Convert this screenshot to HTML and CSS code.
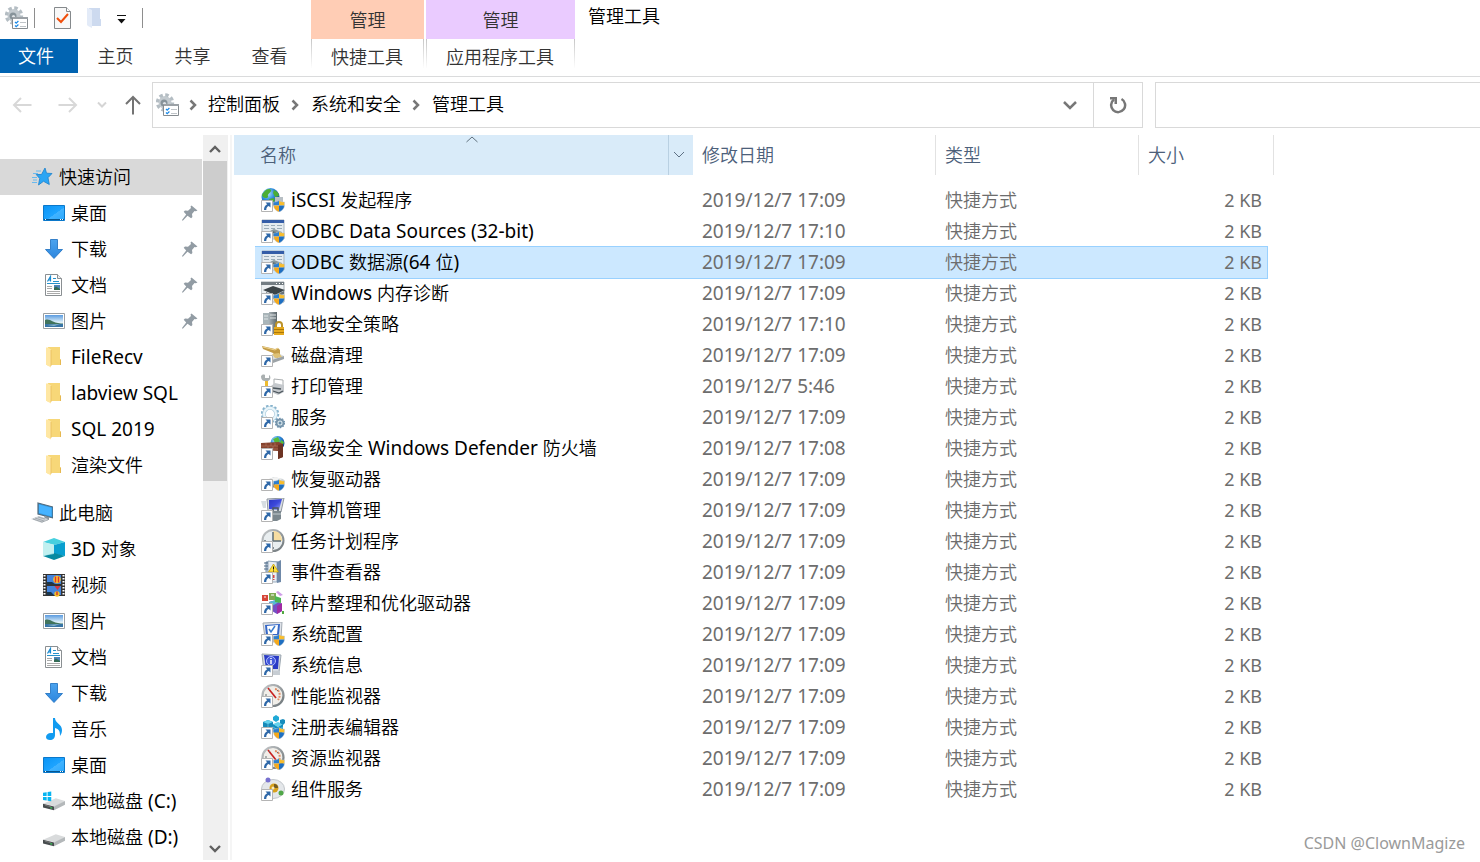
FILE: index.html
```html
<!DOCTYPE html>
<html lang="zh-CN">
<head>
<meta charset="utf-8">
<title>管理工具</title>
<link rel="stylesheet" href="styles.css">
</head>
<body>
<svg class="defs" aria-hidden="true">
  <defs>
    <linearGradient id="g-blue" x1="0" y1="0" x2="1" y2="1"><stop offset="0" stop-color="#0a94f5"/><stop offset=".55" stop-color="#1ea4ff"/><stop offset=".56" stop-color="#41b3ff"/><stop offset="1" stop-color="#2ba9ff"/></linearGradient>
    <linearGradient id="g-sky" x1="0" y1="0" x2="0" y2="1"><stop offset="0" stop-color="#5a9be0"/><stop offset=".6" stop-color="#dff0f8"/></linearGradient>
    <linearGradient id="g-down" x1="0" y1="0" x2="0" y2="1"><stop offset="0" stop-color="#4ba3ee"/><stop offset="1" stop-color="#2d86de"/></linearGradient>
    <linearGradient id="g-screen" x1="0" y1="0" x2="1" y2="1"><stop offset="0" stop-color="#2a35c4"/><stop offset=".5" stop-color="#3c49dc"/><stop offset="1" stop-color="#9fb0f5"/></linearGradient>
    <radialGradient id="g-globe" cx=".35" cy=".3" r=".8"><stop offset="0" stop-color="#b8e6ff"/><stop offset=".45" stop-color="#2f8fdc"/><stop offset="1" stop-color="#0c2f80"/></radialGradient>
    <linearGradient id="g-steel" x1="0" y1="0" x2="1" y2="0"><stop offset="0" stop-color="#a9b2b6"/><stop offset="1" stop-color="#5b666c"/></linearGradient>
    <linearGradient id="g-rim" x1="0" y1="0" x2="1" y2="1"><stop offset="0" stop-color="#c5c8ca"/><stop offset="1" stop-color="#6c7478"/></linearGradient>
  </defs>

  <symbol id="cut" viewBox="0 0 24 24"><path d="M.5 12.5h11v11H.5z" fill="#fff" stroke="#b4b4b4"/><path d="M4.500 14.500h5v5l-1.700-1.500c-1.800.7-2.500 1.800-2.500 4H3c0-3 1-4.700 3.200-5.800z" fill="#2f68a8"/></symbol>
  <symbol id="shield" viewBox="0 0 24 24"><path d="M18 12.500c-1.700 1.200-3.500 1.500-5.500 1.500v3.500H18z" fill="#2c7fd0"/><path d="M18 12.500c1.700 1.200 3.500 1.500 5.500 1.500v3.500H18z" fill="#f9bd2c"/><path d="M12.500 17.500H18V24c-3.200-1.300-5.200-3.200-5.500-6.500z" fill="#f5a91c"/><path d="M23.500 17.500H18V24c3.200-1.300 5.200-3.200 5.500-6.500z" fill="#1e6fc2"/><path d="M18 12.500c1.700 1.200 3.500 1.500 5.500 1.500v3.500c-.3 3.300-2.300 5.200-5.500 6.500-3.200-1.300-5.200-3.200-5.500-6.500V14c2 0 3.800-.3 5.500-1.500z" fill="none" stroke="#bcc8d2" stroke-width=".5"/></symbol>

  <symbol id="tools" viewBox="0 0 24 24"><circle cx="9" cy="9.500" r="6.500" fill="#c3cacf"/><circle cx="9" cy="9.500" r="7.600" fill="none" stroke="#b4bdc3" stroke-width="3.200" stroke-dasharray="3.500 2.470"/><circle cx="8" cy="10" r="3.500" fill="#87939a"/><circle cx="8.500" cy="10.500" r="1.600" fill="#dfe3e6"/><path d="M7.500 11.500h15v11h-15z" fill="#fff" stroke="#858b90"/><path d="M8 11h15v2H8z" fill="#9ba1a6"/><path d="m10 16 1.200 1.200 2.200-2.200M10 19.500l1.200 1.200 2.200-2.200" fill="none" stroke="#1989e8" stroke-width="1.200"/><path d="M15 16.500h6M15 20.500h6" stroke="#bfc4c8"/></symbol>

  <symbol id="star" viewBox="0 0 22 22"><path d="m14 2 1.500 5.200L21 7.500l-4 4.200 1.300 6.800-5.800-3.200-5 3.700 1.200-6.500-3.500-4h5.300z" fill="#2ba5f4" stroke="#1a80cc" stroke-width=".8"/><path d="M5 5h5M2 7.500h5M1 11.500h5M2 14h4M1 16.500h5" stroke="#5cb7f2" stroke-width=".9"/></symbol>
  <symbol id="desktop" viewBox="0 0 22 22"><path d="M.5 3.500h21v15H.5z" fill="url(#g-blue)" stroke="#0b78ca"/><path d="M1 17h20v1H1z" fill="#07568f"/><path d="M2 17.500h1m14 0h1m1 0h1" stroke="#fff"/></symbol>
  <symbol id="download" viewBox="0 0 22 22"><path d="M7.500 1.500h7v10h5L11 20.500l-8.500-9h5z" fill="url(#g-down)" stroke="#2877c4" stroke-width=".9"/></symbol>
  <symbol id="document" viewBox="0 0 22 22"><path d="M2.500.5h12l4 4v17h-16z" fill="#fff" stroke="#8a8f92"/><path d="M14.500.5v4h4" fill="#eee" stroke="#8a8f92"/><path d="m4.500 7.500 3-5v5M5 6h3" fill="none" stroke="#1689d0" stroke-width="1.200"/><path d="M10 4.500h3M10 7.500h6M4 9.500h13" stroke="#2792cc"/><path d="M4 12.500h5M4 14.500h5M4 17.500h13M4 19.500h13" stroke="#aaa"/><path d="M11 11h6v5h-6z" fill="#4c83b5"/><path d="m11 14 2-1.500 4 2.500v1h-6z" fill="#346b55"/></symbol>
  <symbol id="picture" viewBox="0 0 22 22"><path d="M.5 3.500h21v15H.5z" fill="#fff" stroke="#9a9fa3"/><path d="M2 5h18v12H2z" fill="url(#g-sky)"/><path d="M2 10c3-1 5 0 8 1.500s7 2 10 2v1H2z" fill="#40735c"/><path d="M2 14h18v3H2z" fill="#3774a5"/><path d="m4 15 13-1-6 2z" fill="#8bb7c8"/></symbol>
  <symbol id="folder" viewBox="0 0 22 22"><path d="M5 1h12v12l1 1v5H5z" fill="#f7d778"/><path d="M17 13v6h1v-5z" fill="#e6b850"/><path d="M3 1.500h2l3 2V21.500l-4-2.200-1-1z" fill="#ffe7a3"/><path d="M8 4v16" stroke="#e9bd5b" stroke-width=".8"/></symbol>
  <symbol id="computer" viewBox="0 0 22 22"><path d="m7 1 15 4v11L7 12z" fill="#3196dc" stroke="#52697b" stroke-width="1.200"/><path d="m8 2.500 12.500 3.300v8.500L8 11z" fill="#46b3ff"/><path d="m13 14 5 1v3l-4-1z" fill="#89949b"/><path d="m0 17 8-3 9 3-6 4z" fill="#ccd1d5"/><path d="m2 17 9 3m-7-4 9 3m-6-4 7 2M11 20l6-2" stroke="#929a9f" stroke-width=".7"/></symbol>
  <symbol id="cube" viewBox="0 0 22 22"><path d="m11 0 11 4-11 3L0 4z" fill="#46d0df"/><path d="m0 4 11 3v9L0 18z" fill="#b9edef"/><path d="m22 4-11 3v9l11 2z" fill="#099fcf"/><path d="m0 18 11-3 11 3-11 4z" fill="#078aa0"/><path d="M11 6.500V16L0 18V4z" fill="#c5f1f1" opacity=".7"/></symbol>
  <symbol id="video" viewBox="0 0 22 24"><path d="M0 1h22v22H0z" fill="#333"/><path d="M1.500 2v20M20.500 2v20" stroke="#fff" stroke-width="2" stroke-dasharray="1.600 1.400"/><path d="M4 2h14v9H4zM4 13h14v9H4z" fill="#4384dc"/><path d="M4 9h5l3 2H4zM4 19h4l3 3H4z" fill="#173750"/><circle cx="14" cy="6.500" r="3.700" fill="#ffd02c"/><path d="M12.500 3.500v6M15.500 3.500v6" stroke="#dc3333" stroke-width="1.600"/><path d="m11.500 13 3 4 3-4z" fill="#d53842"/><circle cx="14" cy="21" r="2.700" fill="#f3bd26"/><path d="M14 18.500V22" stroke="#d43a33" stroke-width="1.500"/></symbol>
  <symbol id="music" viewBox="0 0 22 22"><path d="M10 0h2c0 5 7 6 7 12 0 3-1 4-2 6 0-5-1-7-5-8v7c0 3-2 5-5 5-2.500 0-4-1-4-3s2-4 5-4h2z" fill="#129bf0"/></symbol>
  <symbol id="disk" viewBox="0 0 24 22"><path d="m0 14 14-6 10 3-10 6z" fill="#d9dbdc"/><path d="m0 14 12 3v4L0 18z" fill="#474c4e"/><path d="m12 17 12-6v4L12 21z" fill="#b4b8ba"/><path d="m2 15.500 7 2" stroke="#777"/><path d="M8 18.500h2" stroke="#32d354" stroke-width="1.300"/></symbol>
  <symbol id="windisk" viewBox="0 0 24 22"><use href="#disk"/><path d="m0 2 4-.5v4H0zm5-.7 4-.6v4.800H5zM0 6.500h4v4L0 10zm5 0h4v4.800l-4-.7z" fill="#07b5f1"/></symbol>
  <symbol id="pin" viewBox="0 0 16 16"><path d="m9.500.5 6 5-1.700.7-1.300-.3-2.500 3 .4 3.100-1.300 1.300L5.500 10.700 1 15.500H0V15l4.200-5.600L1.700 6.800 3 5.500l3 .2L9 3 8.500 1.500z" fill="#929ca4"/></symbol>

  <symbol id="globe" viewBox="0 0 24 24"><circle cx="9.500" cy="9" r="9" fill="url(#g-globe)"/><path d="M3 4c2-3 6-4 7-2S6 6 7 8s-3 3-5 1 0-4 1-5zM13 2c3 1 5 3 5 6l-4 1-2-4zM8 11l5-1 1 3-5 3z" fill="#4cae35"/><path d="M14 9h8v5h-8z" fill="#b8bfc4"/></symbol>
  <symbol id="odbc" viewBox="0 0 24 24"><path d="M1 1h22v19H1z" fill="#e4ebf0" stroke="#aab5bf"/><path d="M1 1h22v3H1z" fill="#345da8"/><path d="M3 6.500h5m2 0h4m2 0h5M3 9.500h5m2 0h4m2 0h5" stroke="#9aacb8"/><path d="m7 13 6-3 8 3v4H7z" fill="#8a999d"/><path d="m10 12 5 1v4h-5z" fill="#4b6065"/></symbol>
  <symbol id="memory" viewBox="0 0 24 24"><path d="M0 1h23v20H0z" fill="#edf0f2" stroke="#a5adb2"/><path d="M0 1h23v3H0z" fill="#747d83"/><path d="M15 2.500h1m2 0h1m2 0h1" stroke="#fff"/><path d="m2 9 10-4 12 4-10 5z" fill="#3c4448"/><path d="m5 11 8 4v3l-8-4zM14 14l9-4v3l-9 4z" fill="#67737a"/></symbol>
  <symbol id="policy" viewBox="0 0 24 24"><path d="M2 1h6v21H2z" fill="#a9b5b9"/><path d="M8 0h8v22H8z" fill="url(#g-steel)"/><path d="M3 4h4M3 7h4m2-4h6M9 6h6" stroke="#e0e5e6"/><path d="M15 15v-2c0-4 6-4 6 0v2" fill="none" stroke="#bb9229" stroke-width="2"/><path d="M13 15h10v8H13z" fill="#e6a91d"/><path d="M13 17.500h10m-10 3h10" stroke="#9d6c00" stroke-width=".8"/></symbol>
  <symbol id="cleanup" viewBox="0 0 24 24"><path d="m3 14 14-4 6 3-9 5-11-1z" fill="#d9dddf"/><path d="m11 17 12-4v3l-11 4z" fill="#9ca3a7"/><path d="m1 3 13 3 3-1 2 2v6l-3 2-4-5L2 6z" fill="#c39c48"/><path d="m2 4 12 3 3-2" stroke="#f0d58e" fill="none"/><path d="m11 11 7-1 3 4-7 1z" fill="#dfc276"/></symbol>
  <symbol id="printer" viewBox="0 0 24 24"><path d="M0 2c0 4 2 5 4 5v7h3V7c3-1 3-5 1-6v3H4V1C2 0 1 1 0 2z" fill="#aab0b1"/><path d="M4 7h3v5H4z" fill="#edbb2e"/><path d="m13 5 9 1v6h-9z" fill="#fff" stroke="#a8acae"/><path d="m10 12 4-3 9 2v7l-6 3-7-3z" fill="#c4c8cc"/><path d="m12 14 8 1m-8 2 6 2 4-2" fill="none" stroke="#4b555c" stroke-width="1.300"/></symbol>
  <symbol id="services" viewBox="0 0 24 24"><circle cx="9" cy="9" r="8" fill="none" stroke="#86b2cc" stroke-width="2.500" stroke-dasharray="2.400 1.790"/><circle cx="9" cy="9" r="6" fill="none" stroke="#a8c9dc" stroke-width="3.500"/><circle cx="9" cy="9" r="6" fill="none" stroke="#e9f5fa" stroke-width="2.300"/><circle cx="19" cy="18" r="3.500" fill="#deebf0" stroke="#7794aa" stroke-width="2"/><circle cx="19" cy="18" r="4.600" fill="none" stroke="#6c90ab" stroke-width="1.200" stroke-dasharray="1.500 1.390"/><circle cx="19" cy="18" r="1.500" fill="#6c90ab"/></symbol>
  <symbol id="firewall" viewBox="0 0 24 24"><circle cx="16.500" cy="7" r="7" fill="url(#g-globe)"/><path d="m12 3 5-2 2 4-4 4zM20 4l3 2-2 5-3-1z" fill="#55bb3b"/><path d="m0 7 18-1 4 2v13l-5 2v-8L0 14z" fill="#87442f"/><path d="m17 9 5-1v13l-5 2z" fill="#6d3323"/><path d="M0 10h17M0 13h17M5 7v3m5-3v3m4-3v3M7 10v3m5-3v3" stroke="#b0745c" stroke-width=".7"/></symbol>
  <symbol id="recovery" viewBox="0 0 24 24"><path d="m3 14 10-4 9 2 2 2-10 5-11-2z" fill="#cfd3d5"/><path d="m3 14 11 3v4L3 17z" fill="#6f7679"/><path d="m6 13 8-3 7 2-8 4z" fill="#f2f3f3"/></symbol>
  <symbol id="manage" viewBox="0 0 24 24"><path d="m6 1 17-1-3 14-13-1z" fill="#d9dde1" stroke="#8f97a0"/><path d="m8 2 13-1-3 11-10-1z" fill="url(#g-screen)"/><path d="M0 3h5v7H2z" fill="#d7dde2"/><path d="M9 13h11v8l-4 2H9z" fill="#7b878e"/><path d="M12 13v-3h5v3" fill="none" stroke="#4c5860" stroke-width="1.500"/><path d="M9 16h11" stroke="#c4cbce"/></symbol>
  <symbol id="clock" viewBox="0 0 24 24"><circle cx="12" cy="11.500" r="10.500" fill="#e9eef0" stroke="url(#g-rim)" stroke-width="2"/><path d="M12 2v10h9C21 6 18 2 12 2z" fill="#f7dda1"/><path d="M12 3v9h8M12 18v2M3 12h2" fill="none" stroke="#5e6d77" stroke-width="1.500"/></symbol>
  <symbol id="event" viewBox="0 0 24 24"><path d="M5 2h12v19H5z" fill="#bccada" stroke="#718ba4"/><path d="m7 1 9 1v20H7z" fill="#e8edf3" stroke="#718ba4" stroke-width=".7"/><path d="m16 2 4-2v22l-4 1z" fill="#6f89a8"/><path d="M3 3h4M3 6h4M3 9h4" stroke="#526d87"/><path d="m12.500 4 5 8h-10z" fill="#ffe13d" stroke="#bc9700" stroke-width=".7"/><path d="M12.500 6.500v3m0 1v1" stroke="#111"/><path d="M12.500 15v3m0 1v1" stroke="#d84343" stroke-width="2"/></symbol>
  <symbol id="defrag" viewBox="0 0 24 24"><path d="M1 4h6v6H1z" fill="#d64638"/><path d="M8 2h7v7H8z" fill="#80aa56"/><path d="m17 0 5 4-3 1-4-4z" fill="#cf9ee8"/><path d="m8 11 7-2 6 4v7l-5 3-5-3z" fill="#7450c3"/><path d="m8 11 7-2 3 2-7 4z" fill="#58bbd4"/><path d="m14 5 6 2v5l-6-1z" fill="#4cb655"/><path d="m16 15 5-3v8l-5 3z" fill="#a02ba3"/><path d="M21 20h2v3h-2z" fill="#52aa42"/><path d="M3 6h2m5-2h3" stroke="#fff"/></symbol>
  <symbol id="config" viewBox="0 0 24 24"><path d="m2 1 19-1-1 16H4z" fill="#dfe3e9" stroke="#a2aab3"/><path d="m4 3 15-1-1 11H5z" fill="#3567c7"/><path d="m6 4 11-1-1 9H7z" fill="#fff"/><path d="m8 7 2 3 4-6" fill="none" stroke="#387bcc" stroke-width="1.500"/><path d="m7 16 8-1 4 4-9 2z" fill="#adb9c3"/></symbol>
  <symbol id="info" viewBox="0 0 24 24"><path d="m1 1 19 1-2 17H3z" fill="#d6dbe2" stroke="#9ba6b0"/><path d="m3 2 15 1-1 13H5z" fill="#293bc5"/><circle cx="10" cy="8" r="4.500" fill="#4459da" stroke="#aebcff"/><path d="M10 7v4m0-6v1" stroke="#fff" stroke-width="1.500"/><path d="M11 18h8v4h-8z" fill="#c7cdd3"/></symbol>
  <symbol id="gauge" viewBox="0 0 24 24"><circle cx="12" cy="11.500" r="10.500" fill="#f0eee9" stroke="url(#g-rim)" stroke-width="2.200"/><path d="M14 5c5 1 6 7 3 11" fill="none" stroke="#e28d66" stroke-width="2" stroke-dasharray="2 1"/><path d="m7 4 8 10" stroke="#c82120" stroke-width="1.700"/><path d="M4 11h2m2-6 1 1m8 0-1 1" stroke="#656e72"/></symbol>
  <symbol id="registry" viewBox="0 0 24 24"><path d="m2 7 5-2 5 2v11l-5 3-5-3z" fill="#1689b8"/><path d="m2 7 5-2 5 2-5 2zM12 9l5-2 5 2-5 3z" fill="#65d2ed"/><path d="m12 9 5 3 5-3v8l-5 3-5-3z" fill="#118fc1"/><path d="M7 9v11M2 12l5 3 5-3 5 3 5-3" stroke="#7fd4e9" stroke-width=".6" fill="none"/><path d="m12 2 3-2 3 2v3l-3 2-3-2z" fill="#20a9d6"/><path d="m19 5 3-1 2 1v3l-2 2-3-2z" fill="#178dbd"/></symbol>
  <symbol id="component" viewBox="0 0 24 24"><ellipse cx="12" cy="12" rx="11.500" ry="9.500" fill="#e4e7ea" stroke="#c1c6ca"/><circle cx="7" cy="3" r="2.500" fill="#7770cf"/><circle cx="13" cy="11" r="4.500" fill="#d8a11b"/><path d="M13 7v4h4a4 4 0 0 0-4-4z" fill="#735a20"/><circle cx="12" cy="11" r="1.500" fill="#f7eabc"/><circle cx="20" cy="16" r="2.500" fill="#50a747"/></symbol>
</svg>

<header class="ribbon">
  <div class="ribbon-main">
    <div class="quick-bar">
      <svg class="icon"><use href="#tools"/></svg>
      <span class="divider"></span>
      <button class="quick-check" aria-label="属性"><svg width="18" height="22" viewBox="0 0 18 22"><path d="M.5.500h12l4 4v17H.5z" fill="#f8f8f8" stroke="#85898c"/><path d="M12.500.500v4h4" fill="#fff" stroke="#85898c"/><path d="m3 11 4 4 7-8" fill="none" stroke="#f04e0b" stroke-width="2"/></svg></button>
      <button class="quick-folder" aria-label="新建文件夹"><svg width="15" height="22" viewBox="0 0 15 22"><path d="M2 1h11v11h1v7H2z" fill="#cddaef"/><path d="M0 1h1l4 2v18l-4-2-1-1z" fill="#e3ebf8"/></svg></button>
      <button class="quick-more" aria-label="自定义快速访问工具栏"><svg width="10" height="9" viewBox="0 0 10 9"><path d="M1 0h9v1H1zM1.500 4h8l-4 4.500z" fill="#111"/></svg></button>
      <span class="divider"></span>
    </div>
    <nav class="tabs">
      <button class="tab file">文件</button>
      <button class="tab">主页</button>
      <button class="tab">共享</button>
      <button class="tab">查看</button>
    </nav>
  </div>
  <div class="context shortcut"><span class="context-title">管理</span><button class="context-tab">快捷工具</button></div>
  <div class="context app"><span class="context-title">管理</span><button class="context-tab">应用程序工具</button></div>
  <h1 class="window-title">管理工具</h1>
</header>

<div class="navigation">
  <div class="nav-buttons">
    <button class="back" aria-label="后退"><svg width="20" height="16" viewBox="0 0 20 16"><path d="M19.500 8H2m7-7L2 8l7 7" fill="none" stroke="#d8d8d8" stroke-width="2"/></svg></button>
    <button class="forward" aria-label="前进"><svg width="20" height="16" viewBox="0 0 20 16"><path d="M.5 8H18m-7-7 7 7-7 7" fill="none" stroke="#d8d8d8" stroke-width="2"/></svg></button>
    <button class="recent" aria-label="最近浏览的位置"><svg width="10" height="8" viewBox="0 0 10 8"><path d="m1 1.500 4 4 4-4" fill="none" stroke="#d5d5d5" stroke-width="2"/></svg></button>
    <button class="up" aria-label="上移"><svg width="16" height="20" viewBox="0 0 16 20"><path d="M8 19.500V2M1 9l7-7 7 7" fill="none" stroke="#737373" stroke-width="2"/></svg></button>
  </div>
  <div class="address">
    <div class="crumbs">
      <svg class="icon"><use href="#tools"/></svg>
      <svg class="crumb-arrow" viewBox="0 0 8 12"><path d="m1.500 1.500 4.500 4.500-4.500 4.500"/></svg><a href="#">控制面板</a>
      <svg class="crumb-arrow" viewBox="0 0 8 12"><path d="m1.500 1.500 4.500 4.500-4.500 4.500"/></svg><a href="#">系统和安全</a>
      <svg class="crumb-arrow" viewBox="0 0 8 12"><path d="m1.500 1.500 4.500 4.500-4.500 4.500"/></svg><a href="#">管理工具</a>
    </div>
    <button class="history" aria-label="以前的位置"><svg width="14" height="10" viewBox="0 0 14 10"><path d="m1 2 6 6 6-6" fill="none" stroke="#777" stroke-width="2.500"/></svg></button>
    <button class="refresh" aria-label="刷新"><svg width="18" height="18" viewBox="0 0 18 18"><path d="M12.500 3A7 7 0 1 1 5 3.500" fill="none" stroke="#777" stroke-width="2.500"/><path d="M1 1h7v7H5.500V3.500H1z" fill="#777"/></svg></button>
  </div>
  <input class="search" type="search" aria-label="搜索">
</div>

<div class="content">
  <aside class="sidebar">
    <ul class="tree">
      <li><a class="root selected" href="#"><svg><use href="#star"/></svg>快速访问</a></li>
      <li><a href="#"><svg><use href="#desktop"/></svg>桌面<svg class="pin"><use href="#pin"/></svg></a></li>
      <li><a href="#"><svg><use href="#download"/></svg>下载<svg class="pin"><use href="#pin"/></svg></a></li>
      <li><a href="#"><svg><use href="#document"/></svg>文档<svg class="pin"><use href="#pin"/></svg></a></li>
      <li><a href="#"><svg><use href="#picture"/></svg>图片<svg class="pin"><use href="#pin"/></svg></a></li>
      <li><a href="#"><svg><use href="#folder"/></svg><span class="latin">FileRecv</span></a></li>
      <li><a href="#"><svg><use href="#folder"/></svg><span class="latin">labview SQL</span></a></li>
      <li><a href="#"><svg><use href="#folder"/></svg><span class="latin">SQL 2019</span></a></li>
      <li><a href="#"><svg><use href="#folder"/></svg>渲染文件</a></li>
    </ul>
    <ul class="tree">
      <li><a class="root" href="#"><svg><use href="#computer"/></svg>此电脑</a></li>
      <li><a href="#"><svg><use href="#cube"/></svg><span><span class="latin">3D </span>对象</span></a></li>
      <li><a href="#"><svg><use href="#video"/></svg>视频</a></li>
      <li><a href="#"><svg><use href="#picture"/></svg>图片</a></li>
      <li><a href="#"><svg><use href="#document"/></svg>文档</a></li>
      <li><a href="#"><svg><use href="#download"/></svg>下载</a></li>
      <li><a href="#"><svg><use href="#music"/></svg>音乐</a></li>
      <li><a href="#"><svg><use href="#desktop"/></svg>桌面</a></li>
      <li><a href="#"><svg><use href="#windisk"/></svg><span>本地磁盘<span class="latin"> (C:)</span></span></a></li>
      <li><a href="#"><svg><use href="#disk"/></svg><span>本地磁盘<span class="latin"> (D:)</span></span></a></li>
    </ul>
  </aside>
  <div class="scrollbar">
    <button aria-label="向上滚动"><svg width="12" height="9" viewBox="0 0 12 9"><path d="m1 7 5-5 5 5" fill="none" stroke="#606060" stroke-width="2.400"/></svg></button>
    <div class="thumb"></div>
    <button class="scroll-down" aria-label="向下滚动"><svg width="12" height="9" viewBox="0 0 12 9"><path d="m1 2 5 5 5-5" fill="none" stroke="#606060" stroke-width="2.400"/></svg></button>
  </div>
  <main class="files">
    <table>
      <colgroup><col class="c-gutter"><col class="c-name"><col class="c-date"><col class="c-type"><col class="c-size"><col class="c-end"></colgroup>
      <thead><tr>
        <th class="sorted" colspan="2"><div class="sorted-head"><span>名称</span><button aria-label="筛选名称"><svg width="12" height="8" viewBox="0 0 12 8"><path d="m1 1 5 5 5-5" fill="none" stroke="#5e7185"/></svg></button><svg class="sort-mark" width="12" height="7" viewBox="0 0 12 7"><path d="m.500 6 5.500-5 5.500 5" fill="none" stroke="#60717f"/></svg></div></th>
        <th>修改日期</th><th>类型</th><th colspan="2">大小</th>
      </tr></thead>
      <tbody>
        <tr><td></td><td class="name"><a href="#"><svg><use href="#globe"/><use href="#shield"/><use href="#cut"/></svg><span><span class="latin">iSCSI </span>发起程序</span></a></td><td class="num">2019/12/7 17:09</td><td>快捷方式</td><td class="size">2 KB</td><td></td></tr>
        <tr><td></td><td class="name"><a href="#"><svg><use href="#odbc"/><use href="#shield"/><use href="#cut"/></svg><span class="latin">ODBC Data Sources (32-bit)</span></a></td><td class="num">2019/12/7 17:10</td><td>快捷方式</td><td class="size">2 KB</td><td></td></tr>
        <tr class="selected"><td></td><td class="name"><a href="#"><svg><use href="#odbc"/><use href="#shield"/><use href="#cut"/></svg><span><span class="latin">ODBC </span>数据源<span class="latin">(64 </span>位<span class="latin">)</span></span></a></td><td class="num">2019/12/7 17:09</td><td>快捷方式</td><td class="size">2 KB</td><td></td></tr>
        <tr><td></td><td class="name"><a href="#"><svg><use href="#memory"/><use href="#shield"/><use href="#cut"/></svg><span><span class="latin">Windows </span>内存诊断</span></a></td><td class="num">2019/12/7 17:09</td><td>快捷方式</td><td class="size">2 KB</td><td></td></tr>
        <tr><td></td><td class="name"><a href="#"><svg><use href="#policy"/><use href="#cut"/></svg>本地安全策略</a></td><td class="num">2019/12/7 17:10</td><td>快捷方式</td><td class="size">2 KB</td><td></td></tr>
        <tr><td></td><td class="name"><a href="#"><svg><use href="#cleanup"/><use href="#cut"/></svg>磁盘清理</a></td><td class="num">2019/12/7 17:09</td><td>快捷方式</td><td class="size">2 KB</td><td></td></tr>
        <tr><td></td><td class="name"><a href="#"><svg><use href="#printer"/><use href="#cut"/></svg>打印管理</a></td><td class="num">2019/12/7 5:46</td><td>快捷方式</td><td class="size">2 KB</td><td></td></tr>
        <tr><td></td><td class="name"><a href="#"><svg><use href="#services"/><use href="#cut"/></svg>服务</a></td><td class="num">2019/12/7 17:09</td><td>快捷方式</td><td class="size">2 KB</td><td></td></tr>
        <tr><td></td><td class="name"><a href="#"><svg><use href="#firewall"/><use href="#cut"/></svg><span>高级安全<span class="latin"> Windows Defender </span>防火墙</span></a></td><td class="num">2019/12/7 17:08</td><td>快捷方式</td><td class="size">2 KB</td><td></td></tr>
        <tr><td></td><td class="name"><a href="#"><svg><use href="#recovery"/><use href="#shield"/><use href="#cut"/></svg>恢复驱动器</a></td><td class="num">2019/12/7 17:09</td><td>快捷方式</td><td class="size">2 KB</td><td></td></tr>
        <tr><td></td><td class="name"><a href="#"><svg><use href="#manage"/><use href="#cut"/></svg>计算机管理</a></td><td class="num">2019/12/7 17:09</td><td>快捷方式</td><td class="size">2 KB</td><td></td></tr>
        <tr><td></td><td class="name"><a href="#"><svg><use href="#clock"/><use href="#cut"/></svg>任务计划程序</a></td><td class="num">2019/12/7 17:09</td><td>快捷方式</td><td class="size">2 KB</td><td></td></tr>
        <tr><td></td><td class="name"><a href="#"><svg><use href="#event"/><use href="#cut"/></svg>事件查看器</a></td><td class="num">2019/12/7 17:09</td><td>快捷方式</td><td class="size">2 KB</td><td></td></tr>
        <tr><td></td><td class="name"><a href="#"><svg><use href="#defrag"/><use href="#cut"/></svg>碎片整理和优化驱动器</a></td><td class="num">2019/12/7 17:09</td><td>快捷方式</td><td class="size">2 KB</td><td></td></tr>
        <tr><td></td><td class="name"><a href="#"><svg><use href="#config"/><use href="#shield"/><use href="#cut"/></svg>系统配置</a></td><td class="num">2019/12/7 17:09</td><td>快捷方式</td><td class="size">2 KB</td><td></td></tr>
        <tr><td></td><td class="name"><a href="#"><svg><use href="#info"/><use href="#cut"/></svg>系统信息</a></td><td class="num">2019/12/7 17:09</td><td>快捷方式</td><td class="size">2 KB</td><td></td></tr>
        <tr><td></td><td class="name"><a href="#"><svg><use href="#gauge"/><use href="#cut"/></svg>性能监视器</a></td><td class="num">2019/12/7 17:09</td><td>快捷方式</td><td class="size">2 KB</td><td></td></tr>
        <tr><td></td><td class="name"><a href="#"><svg><use href="#registry"/><use href="#shield"/><use href="#cut"/></svg>注册表编辑器</a></td><td class="num">2019/12/7 17:09</td><td>快捷方式</td><td class="size">2 KB</td><td></td></tr>
        <tr><td></td><td class="name"><a href="#"><svg><use href="#gauge"/><use href="#shield"/><use href="#cut"/></svg>资源监视器</a></td><td class="num">2019/12/7 17:09</td><td>快捷方式</td><td class="size">2 KB</td><td></td></tr>
        <tr><td></td><td class="name"><a href="#"><svg><use href="#component"/><use href="#cut"/></svg>组件服务</a></td><td class="num">2019/12/7 17:09</td><td>快捷方式</td><td class="size">2 KB</td><td></td></tr>
      </tbody>
    </table>
  </main>
</div>
<div class="watermark">CSDN @ClownMagize</div>
</body>
</html>
```
FILE: styles.css
```css
* { box-sizing: border-box; }

body {
  margin: 0;
  min-height: 100vh;
  display: flex;
  flex-direction: column;
  background: #fff;
  color: #000;
  font-family: "Noto Sans", "Noto Sans CJK SC", sans-serif;
  font-size: 18px;
  font-weight: 350;
  line-height: 24px;
}

button {
  display: flex;
  align-items: center;
  justify-content: center;
  padding: 0;
  border: 0;
  background: none;
  color: inherit;
  font: inherit;
}

a { color: inherit; text-decoration: none; }
svg { display: block; flex: none; }
.defs { position: absolute; width: 0; height: 0; }
.icon { width: 24px; height: 24px; }
.latin, .num { font-size: 19px; font-weight: 400; }

/* Ribbon */
.ribbon {
  display: flex;
  gap: 2px;
  height: 77px;
  border-bottom: 1px solid #dadbdc;
}
.quick-bar { display: flex; align-items: center; height: 39px; padding: 0 0 3px 5px; }
.divider { width: 1px; height: 20px; margin-left: 5px; background: #8e8e8e; }
.quick-check { margin-left: 19px; }
.quick-folder { margin-left: 15px; }
.quick-more { margin: 2px 11px 0 14px; }
.tabs { display: flex; }
.tab { width: 77px; height: 34px; padding-right: 2px; color: #333; }
.tab.file { width: 78px; padding-right: 6px; background: #0063b1; color: #fff; }
.context { display: flex; flex-direction: column; color: #333; }
.context-title {
  display: flex;
  align-items: center;
  justify-content: center;
  height: 39px;
}
.context-tab {
  height: 29px;
  padding: 6px 20px 0 19px;
  border: 1px solid;
  border-width: 0 1px;
  border-image: linear-gradient(#c4c4c4, #fff) 1;
}
.shortcut .context-title { background: #ffcdb5; }
.app .context-title { background: #eacbff; }
.window-title { margin: 4px 0 0 11px; font-size: 18px; font-weight: 350; line-height: 24px; }

/* Navigation */
.navigation { display: flex; padding: 5px 0 7px; }
.nav-buttons { display: flex; align-items: center; width: 152px; padding-left: 12px; }
.forward { margin-left: 26px; }
.recent { margin-left: 19px; }
.up { margin-left: 18px; }
.address { display: flex; flex: 1; height: 46px; border: 1px solid #d9d9d9; }
.crumbs { display: flex; align-items: center; flex: 1; padding-left: 3px; }
.crumbs a { padding-bottom: 2px; }
.crumb-arrow {
  width: 8px;
  height: 12px;
  margin: 0 12px 0 11px;
  fill: none;
  stroke: #777;
  stroke-width: 2.5px;
}
.icon + .crumb-arrow { margin: 0 11px 0 9px; }
.history { width: 47px; }
.refresh { width: 49px; border-left: 1px solid #d9d9d9; }
.search {
  width: 325px;
  height: 46px;
  margin-left: 12px;
  border: 1px solid #d9d9d9;
  border-right: 0;
  background: #fff;
  font: inherit;
}

/* Folder tree */
.content { display: flex; flex: 1; padding-bottom: 2px; }
.sidebar { width: 203px; padding-top: 24px; }
.tree { margin: 0 0 12px; padding: 0; list-style: none; }
.tree:last-child { margin-bottom: 0; }
.tree a {
  display: flex;
  align-items: center;
  gap: 6px;
  height: 36px;
  margin-right: 1px;
  padding: 0 4px 0 43px;
}
.tree a.root { padding-left: 31px; }
.tree a.selected { background: #d9d9d9; }
.tree svg { width: 22px; height: 24px; }
.tree .pin { width: 16px; height: 16px; margin-left: auto; }

.scrollbar { display: flex; flex-direction: column; width: 25px; background: #f0f0f0; }
.scrollbar button { height: 26px; padding: 2px 1px 0 0; }
.thumb { height: 320px; margin-right: 1px; background: #cdcdcd; }
.scrollbar .scroll-down { margin-top: auto; }

/* File list */
.files { flex: 1; margin-left: 2px; padding-left: 2px; border-left: 2px solid #f5f5f5; }
table { width: 1040px; border-collapse: separate; border-spacing: 0; table-layout: fixed; }
.c-gutter { width: 21px; }
.c-name { width: 438px; }
.c-date { width: 243px; }
.c-type { width: 203px; }
.c-size { width: 129px; }
.c-end { width: 6px; }
th {
  height: 40px;
  padding: 0 9px;
  border-right: 1px solid #e2e2e2;
  color: #4c607a;
  font-weight: 350;
  text-align: left;
}
th.sorted { position: relative; padding: 0; border: 0; background: #d9ebf9; }
.sorted-head { display: flex; align-items: center; height: 40px; padding-left: 26px; }
.sorted-head span { flex: 1; }
.sorted-head button { width: 25px; height: 40px; padding-right: 4px; border-left: 1px solid #b9d0e2; }
.sort-mark { position: absolute; top: 1px; left: 50%; margin-left: 2px; }
tbody::before { content: ""; display: table-row; height: 10px; }
td { height: 31px; padding: 0 9px 2px; color: #6d6d6d; }
td:first-child, td:last-child { padding: 0; }
.name { padding: 0 6px 2px; color: #000; }
.name a { display: flex; align-items: center; gap: 6px; height: 29px; }
.name svg { width: 24px; height: 24px; }
.size { padding-right: 6px; text-align: right; font-weight: 400; }
.selected td:not(:first-child, :last-child) {
  background: #cce8ff;
  box-shadow: 0 -1px #99d1ff, 0 1px #99d1ff;
}
.selected .name { background: linear-gradient(90deg, #99d1ff 1px, #cce8ff 1px); }
.selected td.size { border-right: 1px solid #99d1ff; padding-right: 5px; }

.watermark {
  position: absolute;
  right: 15px;
  bottom: 7px;
  color: #9a9a9a;
  font-size: 16px;
  font-weight: 400;
}
```
